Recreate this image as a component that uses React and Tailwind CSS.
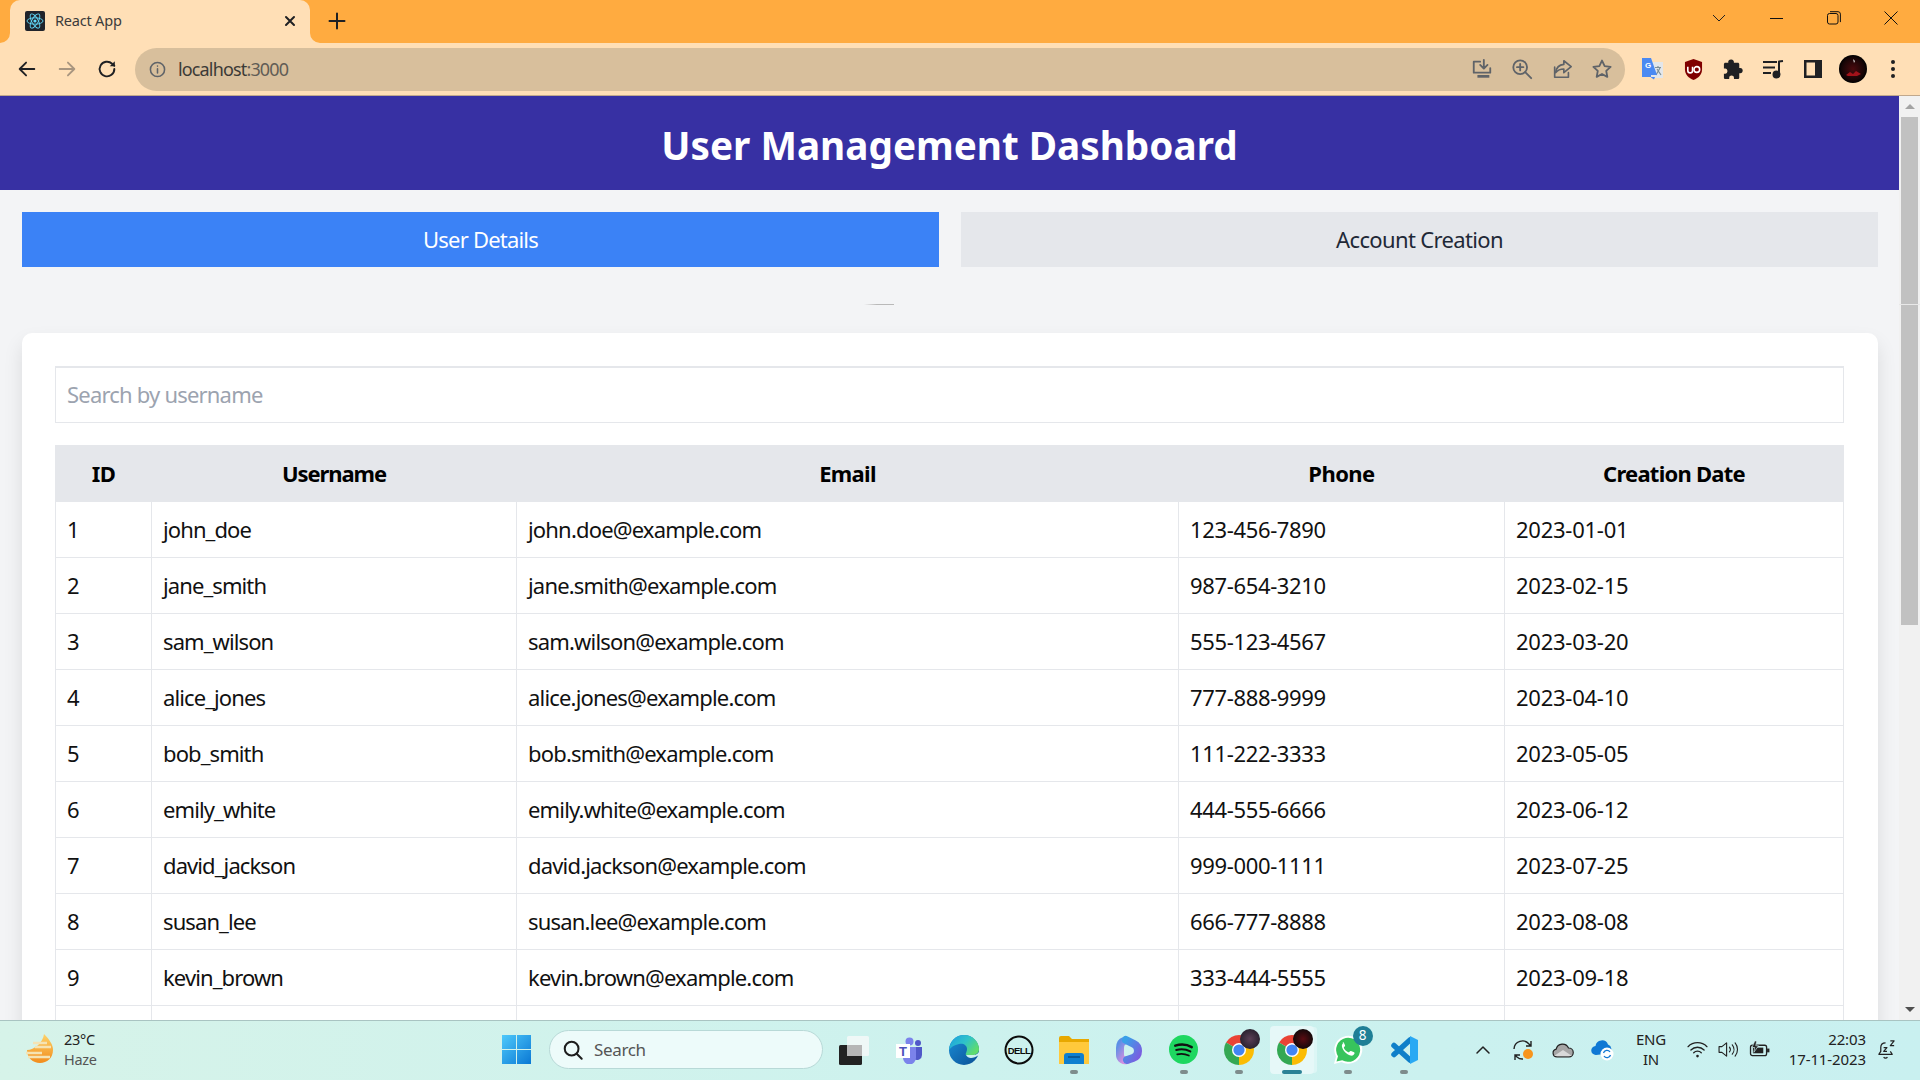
import React from "react";

const rows = [
  [1, "john_doe", "john.doe@example.com", "123-456-7890", "2023-01-01"],
  [2, "jane_smith", "jane.smith@example.com", "987-654-3210", "2023-02-15"],
  [3, "sam_wilson", "sam.wilson@example.com", "555-123-4567", "2023-03-20"],
  [4, "alice_jones", "alice.jones@example.com", "777-888-9999", "2023-04-10"],
  [5, "bob_smith", "bob.smith@example.com", "111-222-3333", "2023-05-05"],
  [6, "emily_white", "emily.white@example.com", "444-555-6666", "2023-06-12"],
  [7, "david_jackson", "david.jackson@example.com", "999-000-1111", "2023-07-25"],
  [8, "susan_lee", "susan.lee@example.com", "666-777-8888", "2023-08-08"],
  [9, "kevin_brown", "kevin.brown@example.com", "333-444-5555", "2023-09-18"],
];

const Slot = ({ children, className = "w-[40px]" }) => (
  <div className={`relative flex h-full shrink-0 items-center justify-center ${className}`}>{children}</div>
);

const TSlot = ({ children, className = "w-[55px]" }) => (
  <div className={`relative flex h-full shrink-0 items-center justify-center pb-[2px] ${className}`}>{children}</div>
);

const Dot = ({ active }) =>
  active ? (
    <span className="absolute bottom-0 left-1/2 h-[4px] w-[20px] -translate-x-1/2 rounded-full bg-[#2b8296]" />
  ) : (
    <span className="absolute bottom-[6px] left-1/2 h-[4px] w-[8px] -translate-x-1/2 rounded-full bg-[#7e8c8c]" />
  );

function ChromeIcon({ id, dark }) {
  return (
    <div className="relative h-[30px] w-[30px]">
      <svg viewBox="0 0 30 30" width="30" height="30">
        <path d="M15 15 L27.99 7.5 A15 15 0 0 0 2.01 7.5 Z" fill="#ea4335" />
        <path d="M15 15 L2.01 7.5 A15 15 0 0 0 15 30 Z" fill="#34a853" />
        <path d="M15 15 L15 30 A15 15 0 0 0 27.99 7.5 Z" fill="#fbbc04" />
        <circle cx="15" cy="15" r="7" fill="#fff" />
        <circle cx="15" cy="15" r="5.6" fill="#4285f4" />
      </svg>
      <svg viewBox="0 0 20 20" width="20" height="20" className="absolute -right-[6px] -top-[6px]">
        <defs>
          <radialGradient id={id}>
            <stop offset="0" stopColor={dark ? "#5a0c12" : "#5b3f56"} />
            <stop offset="1" stopColor={dark ? "#14090a" : "#2a2230"} />
          </radialGradient>
        </defs>
        <circle cx="10" cy="10" r="10" fill={`url(#${id})`} />
      </svg>
    </div>
  );
}

const Stroke = ({ children, size = 20, color = "#1f2023", w = 2, vb = 24 }) => (
  <svg viewBox={`0 0 ${vb} ${vb}`} width={size} height={size} fill="none" stroke={color} strokeWidth={w} strokeLinecap="round" strokeLinejoin="round">
    {children}
  </svg>
);

function TabBar() {
  return (
    <div className="flex h-[43px] shrink-0 items-stretch bg-[#ffab40] pl-[10px]">
      <div className="relative flex w-[300px] items-center rounded-t-[10px] bg-[#ffdfb6] pb-[2px] pl-[15px] pr-[12px]">
        <svg viewBox="0 0 10 10" width="10" height="10" className="absolute bottom-0 -left-[10px]">
          <path d="M10 0 A10 10 0 0 1 0 10 L10 10 Z" fill="#ffdfb6" />
        </svg>
        <svg viewBox="0 0 10 10" width="10" height="10" className="absolute bottom-0 -right-[10px]">
          <path d="M0 0 A10 10 0 0 0 10 10 L0 10 Z" fill="#ffdfb6" />
        </svg>
        <svg viewBox="0 0 20 20" width="20" height="20" className="shrink-0">
          <rect width="20" height="20" rx="2" fill="#20232a" />
          <g fill="none" stroke="#61dafb" strokeWidth="0.9">
            <ellipse cx="10" cy="10" rx="8" ry="3.2" />
            <ellipse cx="10" cy="10" rx="8" ry="3.2" transform="rotate(60 10 10)" />
            <ellipse cx="10" cy="10" rx="8" ry="3.2" transform="rotate(120 10 10)" />
          </g>
          <circle cx="10" cy="10" r="1.6" fill="#61dafb" />
        </svg>
        <span className="ml-[10px] flex-1 text-[14.5px] text-[#3b3b3b] tracking-[-0.2px]">React App</span>
        <Stroke size={16} w={3}>
          <path d="M6 6l12 12M18 6L6 18" />
        </Stroke>
      </div>
      <div className="flex w-[54px] items-center justify-center pb-[2px]">
        <Stroke size={20} w={2.4}>
          <path d="M12 3v18M3 12h18" />
        </Stroke>
      </div>
      <div className="flex-1" />
      <div className="flex items-start">
        <Slot className="!h-[36px] w-[56px]">
          <svg viewBox="0 0 14 8" width="14" height="8" fill="none" stroke="#222" strokeWidth="1">
            <path d="M1 1l6 6 6-6" />
          </svg>
        </Slot>
        <Slot className="!h-[36px] w-[58px]">
          <span className="h-px w-[13px] bg-[#111]" />
        </Slot>
        <Slot className="!h-[36px] w-[57px]">
          <svg viewBox="0 0 14 14" width="14" height="14" fill="none" stroke="#111" strokeWidth="1">
            <rect x="0.5" y="2.5" width="10.5" height="10.5" rx="2" />
            <path d="M3 .7h8a2.4 2.4 0 0 1 2.4 2.4v8" />
          </svg>
        </Slot>
        <Slot className="!h-[36px] w-[58px]">
          <svg viewBox="0 0 14 14" width="14" height="14" fill="none" stroke="#111" strokeWidth="1">
            <path d="M.5.5l13 13M13.5.5l-13 13" />
          </svg>
        </Slot>
      </div>
    </div>
  );
}

function Toolbar() {
  const g = "#5f6368";
  return (
    <div className="flex h-[53px] shrink-0 items-center border-b border-[#c0a88d] bg-[#ffdfb6] pl-[7px]">
      <Slot>
        <Stroke size={22} w={2}>
          <path d="M20 12H4M11 5l-7 7 7 7" />
        </Stroke>
      </Slot>
      <Slot>
        <Stroke size={22} w={2} color="#a8957f">
          <path d="M4 12h16M13 5l7 7-7 7" />
        </Stroke>
      </Slot>
      <Slot>
        <Stroke size={22} w={2.1}>
          <path d="M20 12a8 8 0 1 1-2.4-5.7L20 8.5" />
          <path d="M20.5 3.5v5.5h-5.5" fill="#1f2023" stroke="none" />
        </Stroke>
      </Slot>
      <div className="ml-[8px] flex h-[43px] w-[1490px] shrink-0 items-center rounded-full bg-[#d8bf9c] pl-[14px] pr-[3px]">
        <Stroke size={17} color={g} w={2.2}>
          <circle cx="12" cy="12" r="10" />
          <path d="M12 11v6M12 7v.2" />
        </Stroke>
        <span className="ml-[12px] flex-1 text-[18px] tracking-[-0.85px] text-[#3c3a36]">
          localhost<span className="text-[#615c55]">:3000</span>
        </span>
        <Slot>
          <Stroke size={22} color={g} w={2}>
            <path d="M10 4H3v12h18v-5M14 2v9M10 7.5l4 4 4-4" />
            <path d="M7 20h13" strokeWidth="3" strokeLinecap="butt" />
          </Stroke>
        </Slot>
        <Slot>
          <Stroke size={22} color={g} w={2}>
            <circle cx="10" cy="10" r="7.5" />
            <path d="M15.5 15.5L22 22M10 6.5v7M6.5 10h7" />
          </Stroke>
        </Slot>
        <Slot>
          <Stroke size={22} color={g} w={1.8}>
            <path d="M4 10v11h15v-5" />
            <path d="M14 3l8 6.5-8 6.5v-4c-4 0-6.5 1-9 4 .7-5 3.5-8.5 9-9z" />
          </Stroke>
        </Slot>
        <Slot>
          <Stroke size={22} color={g} w={2}>
            <path d="M12 2.8l2.9 6 6.5.9-4.8 4.4 1.2 6.5-5.8-3.2-5.8 3.2 1.2-6.5-4.8-4.4 6.5-.9z" />
          </Stroke>
        </Slot>
      </div>
      <div className="ml-[8px] flex h-full items-center">
        <Slot>
          <svg viewBox="0 0 22 22" width="22" height="22">
            <path d="M9 4h12v16H9z" fill="#e3e6ea" />
            <path d="M13 9.5h6M16 8v1.5M14 17l4-7M15 11l4 6" stroke="#7d8f96" strokeWidth="1.2" fill="none" />
            <path d="M0 0h9l6 17H9v2.5l3 2 1-2.5H0z" fill="#4b8af2" />
            <text x="3" y="10" fontSize="8" fontWeight="700" fill="#fff" fontFamily="Liberation Sans, sans-serif">G</text>
          </svg>
        </Slot>
        <Slot>
          <svg viewBox="0 0 20 22" width="19" height="21">
            <path d="M10 0l9 3v8c0 5.5-4 9-9 11-5-2-9-5.500-9-11V3z" fill="#800000" />
            <path d="M4 8v4a2.500 2.500 0 0 0 5 0V8" fill="none" stroke="#fff" strokeWidth="1.700" />
            <circle cx="13.500" cy="11" r="3" fill="none" stroke="#fff" strokeWidth="1.700" />
          </svg>
        </Slot>
        <Slot>
          <svg viewBox="0 0 24 24" width="23" height="23">
            <path d="M9.500 1.500a2.800 2.800 0 0 1 2.900 3.500h4.100c.8 0 1.500.7 1.500 1.500v4h1c3.500 0 3.500 5.500 0 5.500h-1v4.500c0 .8-.7 1.500-1.500 1.500h-4v-1.200c0-3.300-5-3.300-5 0V22H3.500C2.700 22 2 21.300 2 20.500v-4h1.200c3.300 0 3.300-5.500 0-5.500H2V6.500C2 5.700 2.700 5 3.500 5h3.100c-.7-1.700.7-3.500 2.900-3.500z" fill="#1f2023" />
          </svg>
        </Slot>
        <Slot>
          <Stroke size={24} w={2} vb={24}>
            <path d="M2 5h14M2 10.500h12M2 16h8" strokeLinecap="butt" />
            <circle cx="15.500" cy="17.500" r="3" fill="#1f2023" />
            <path d="M18 18V4.500l4-.5" strokeLinecap="butt" />
          </Stroke>
        </Slot>
        <Slot>
          <svg viewBox="0 0 18 18" width="18" height="18">
            <path d="M0 0h18v18H0zM2.500 2.500v13H11v-13z" fill="#1f2023" fillRule="evenodd" />
          </svg>
        </Slot>
        <Slot>
          <svg viewBox="0 0 28 28" width="28" height="28">
            <defs>
              <radialGradient id="av">
                <stop offset="0" stopColor="#4a0a0e" />
                <stop offset="0.8" stopColor="#160506" />
                <stop offset="1" stopColor="#000" />
              </radialGradient>
            </defs>
            <circle cx="14" cy="14" r="14" fill="url(#av)" />
            <path d="M7 20l4-3 3 2 3-3 5 3-4 2H9z" fill="#a3121a" />
            <path d="M14 4l2 2-1 2z" fill="#ddd" />
          </svg>
        </Slot>
        <Slot className="w-[39px]">
          <svg viewBox="0 0 6 20" width="6" height="20" fill="#1f2023">
            <circle cx="3" cy="3" r="2" />
            <circle cx="3" cy="10" r="2" />
            <circle cx="3" cy="17" r="2" />
          </svg>
        </Slot>
      </div>
    </div>
  );
}

function Scrollbar() {
  return (
    <div className="relative flex w-[21px] shrink-0 flex-col items-center bg-[#f1f1f1]">
      <div className="flex h-[21px] items-center justify-center">
        <span className="h-0 w-0 border-x-[5px] border-b-[5px] border-x-transparent border-b-[#a3a3a3]" />
      </div>
      <div className="h-[508px] w-[17px] bg-[#c1c1c1]" />
      <div className="flex-1" />
      <div className="flex h-[21px] items-center justify-center">
        <span className="h-0 w-0 border-x-[5px] border-t-[5px] border-x-transparent border-t-[#505050]" />
      </div>
      <span className="absolute left-0 right-0 top-[208px] h-px bg-[#e8e8e8]" />
    </div>
  );
}

function Content() {
  const th = "border border-[#e5e7eb] px-[12px] text-center font-bold text-black";
  const td = "border border-[#e5e7eb] px-[11px] text-[#111]";
  const cols = ["tracking-[-0.8px]", "tracking-[-0.9px]", "tracking-[-0.82px]", "tracking-[-0.35px]", "tracking-[-0.25px]"];
  return (
    <div className="min-w-0 flex-1 overflow-hidden bg-[#f3f4f6] text-[22px] tracking-[-0.8px]">
      <h1 className="flex h-[94px] items-center justify-center bg-[#3730a3] pt-[5px] text-[38.7px] font-bold tracking-normal text-white">
        User Management Dashboard
      </h1>
      <div className="grid grid-cols-2 gap-[22px] pl-[22px] pr-[21px] pt-[22px]">
        <button className="h-[55px] bg-[#3b82f6] text-white">User Details</button>
        <button className="h-[55px] bg-[#e5e7eb] tracking-[-0.65px] text-[#1f2937]">Account Creation</button>
      </div>
      <div className="h-[66px] pl-[851px] pt-[37px]">
        <div className="h-px w-[43px] bg-linear-to-r from-[#f3f4f6] from-30% to-[#b9b9b9] to-60%" />
      </div>
      <div className="ml-[22px] mr-[21px] rounded-t-[10px] bg-white pb-[40px] pl-[33px] pr-[34px] pt-[33px] shadow-[0_10px_19px_0_rgba(0,0,0,0.1)]">
        <div className="mb-[22px] flex h-[57px] items-center border border-t-2 border-[#e5e7eb] px-[11px] pb-[2px] text-[#9ca3af]">
          Search by username
        </div>
        <table className="w-full table-fixed border-collapse text-left">
          <colgroup>
            <col className="w-[96px]" />
            <col className="w-[365px]" />
            <col className="w-[662px]" />
            <col className="w-[326px]" />
            <col />
          </colgroup>
          <thead>
            <tr className="h-[56px] bg-[#e5e7eb]">
              <th className={`${th} tracking-[-0.55px]`}>ID</th>
              <th className={`${th} tracking-[-1.1px]`}>Username</th>
              <th className={`${th} tracking-[-0.7px]`}>Email</th>
              <th className={`${th} tracking-[-0.55px]`}>Phone</th>
              <th className={`${th} tracking-[-0.75px]`}>Creation Date</th>
            </tr>
          </thead>
          <tbody>
            {rows.map((r) => (
              <tr key={r[0]} className="h-[56px]">
                {r.map((c, i) => (
                  <td key={i} className={`${td} ${cols[i]}`}>{c}</td>
                ))}
              </tr>
            ))}
            <tr className="h-[56px]">
              <td className={td} />
              <td className={td} />
              <td className={td} />
              <td className={td} />
              <td className={td} />
            </tr>
          </tbody>
        </table>
      </div>
    </div>
  );
}

function Taskbar() {
  return (
    <div className="flex h-[60px] shrink-0 items-stretch border-t border-[#a9c4c2] bg-linear-to-r from-[#d6f3e9] via-[#cdf2ee] to-[#c9f0f0] text-[#222]">
      <div className="flex w-[489px] shrink-0 items-center pb-[3px] pl-[24px]">
        <svg viewBox="0 0 32 32" width="32" height="32" className="shrink-0">
          <defs>
            <linearGradient id="sun" x1="0" y1="0" x2="0" y2="1">
              <stop offset="0" stopColor="#fdd36a" />
              <stop offset="1" stopColor="#f28c1c" />
            </linearGradient>
          </defs>
          <path d="M20 1c6 6 9 11 9 16 0 8-6 13-13 13S3 25 3 17C10 17 19 10 20 1z" fill="url(#sun)" />
          <path d="M9 10h14M11 14h16M2 20h16M4 24h22" stroke="#f5e3b3" strokeWidth="2.500" />
        </svg>
        <div className="ml-[8px] text-[14.500px] leading-[20px] tracking-[-0.3px]">
          <div>23°C</div>
          <div className="text-[#555]">Haze</div>
        </div>
      </div>
      <TSlot>
        <svg viewBox="0 0 29 29" width="29" height="29">
          <defs>
            <linearGradient id="win" x1="0" y1="0" x2="1" y2="1">
              <stop offset="0" stopColor="#4ec9fb" />
              <stop offset="1" stopColor="#0a78d4" />
            </linearGradient>
          </defs>
          <path d="M0 0h14v14H0zM15 0h14v14H15zM0 15h14v14H0zM15 15h14v14H15z" fill="url(#win)" />
        </svg>
      </TSlot>
      <div className="mb-[2px] ml-[5px] flex h-[39px] w-[274px] shrink-0 items-center self-center rounded-full border border-[#b8d9d7] bg-[#edfbfa] pl-[12px]">
        <Stroke size={22} w={2.2} color="#1d1d1d">
          <circle cx="10.500" cy="10.500" r="7.500" />
          <path d="M16 16l5.500 5.500" />
        </Stroke>
        <span className="ml-[10px] text-[17px] tracking-[-0.35px] text-[#555]">Search</span>
      </div>
      <TSlot className="ml-[3px] w-[55px]">
        <svg viewBox="0 0 30 30" width="30" height="30">
          <rect x="0" y="10" width="23" height="20" rx="1.500" fill="#222" />
          <rect x="8" y="1" width="22" height="20" rx="1.500" fill="#f7f9f9" fillOpacity="0.8" />
          <rect x="8" y="10" width="15" height="11" fill="#b6b6b6" />
        </svg>
      </TSlot>
      <TSlot>
        <svg viewBox="0 0 28 28" width="28" height="28">
          <circle cx="14.500" cy="5.500" r="4" fill="#7b83eb" />
          <circle cx="23" cy="7" r="3" fill="#5059c9" />
          <path d="M18 11h9v8a5 5 0 0 1-8 4z" fill="#5059c9" />
          <path d="M8 11h13v11a6.500 6.500 0 0 1-13 0z" fill="#7b83eb" />
          <rect x="1" y="8" width="14" height="14" fill="#fff" />
          <text x="4" y="20" fontSize="13" fontWeight="700" fill="#4b53bc" fontFamily="Liberation Sans, sans-serif">T</text>
        </svg>
      </TSlot>
      <TSlot>
        <svg viewBox="0 0 30 30" width="30" height="30">
          <defs>
            <linearGradient id="eg" x1="0" y1="0" x2="1" y2="0.6">
              <stop offset="0" stopColor="#1b9de2" />
              <stop offset="0.55" stopColor="#2fc3c9" />
              <stop offset="1" stopColor="#5fdc6c" />
            </linearGradient>
            <linearGradient id="eb" x1="0" y1="0" x2="1" y2="1">
              <stop offset="0" stopColor="#1a8fd8" />
              <stop offset="1" stopColor="#0b4f94" />
            </linearGradient>
          </defs>
          <circle cx="15" cy="15" r="15" fill="url(#eb)" />
          <path d="M0 15C1 5 8 0 15 0c9 0 15 7 15 14 0 4-3 6-7 6h-6c-1-1 1-3 1-6 0-4-4-6-8-5-5 1-8 3-10 6z" fill="url(#eg)" />
          <path d="M17 20c2 4 7 4 13 0v-3c-2 3-5 3-7 3z" fill="#cdf2ee" />
        </svg>
      </TSlot>
      <TSlot>
        <svg viewBox="0 0 30 30" width="30" height="30">
          <circle cx="15" cy="15" r="13.500" fill="none" stroke="#0b0b0b" strokeWidth="2" />
          <text x="15" y="18.500" textAnchor="middle" fontSize="9.500" fontWeight="700" letterSpacing="-0.6" fill="#0b0b0b" fontFamily="Liberation Sans, sans-serif">DELL</text>
        </svg>
      </TSlot>
      <TSlot>
        <svg viewBox="0 0 30 28" width="30" height="28">
          <path d="M0 2a2 2 0 0 1 2-2h8l3 3h17v24H0z" fill="#e8a800" />
          <path d="M0 6h30v22H0z" fill="#ffc93c" />
          <path d="M5 20a3 3 0 0 1 3-3h14a3 3 0 0 1 3 3v8H5z" fill="#0f7fd0" />
          <path d="M9 21h12" stroke="#0a4f88" strokeWidth="1.500" />
        </svg>
        <Dot />
      </TSlot>
      <TSlot>
        <svg viewBox="0 0 28 30" width="28" height="30" fill="none" strokeWidth="8" strokeLinecap="round" strokeLinejoin="round">
          <defs>
            <linearGradient id="c1" x1="0" y1="0" x2="1" y2="1">
              <stop offset="0" stopColor="#3aa0e8" />
              <stop offset="1" stopColor="#7c5ce0" />
            </linearGradient>
            <linearGradient id="c2" x1="0" y1="0" x2="0.6" y2="1">
              <stop offset="0" stopColor="#5b8fe6" />
              <stop offset="1" stopColor="#d58fe0" />
            </linearGradient>
          </defs>
          <path d="M9 6C6 7 5 10 5 13v7c0 4 4 6 7 5" stroke="url(#c2)" />
          <path d="M11 5l8 4c3 1.500 4 4 4 7 0 4-2 6-5 7l-6 2" stroke="url(#c1)" />
        </svg>
      </TSlot>
      <TSlot>
        <svg viewBox="0 0 30 30" width="29" height="29">
          <circle cx="15" cy="15" r="15" fill="#1ed760" />
          <g fill="none" stroke="#111" strokeLinecap="round">
            <path d="M6.500 11c6-1.800 12-1.300 17 1.500" strokeWidth="2.600" />
            <path d="M7.500 15.500c5-1.300 10-.9 14.500 1.500" strokeWidth="2.200" />
            <path d="M8.500 20c4-1 8-.7 12 1.300" strokeWidth="1.800" />
          </g>
        </svg>
        <Dot />
      </TSlot>
      <TSlot>
        <ChromeIcon id="ch1" />
        <Dot />
      </TSlot>
      <TSlot>
        <div className="relative mr-[4px] flex h-[48px] w-[44px] items-center justify-center rounded-[4px] bg-[#e6f8f8] shadow-[4px_0_0_-1px_#dcf6f5]">
          <ChromeIcon id="ch2" dark />
          <Dot active />
        </div>
      </TSlot>
      <TSlot className="-ml-[1px] mr-[1px] w-[55px]">
        <div className="relative h-[30px] w-[30px]">
          <svg viewBox="0 0 30 30" width="30" height="30">
            <path d="M1 29l2-7.500a14 14 0 1 1 5.500 5.500z" fill="#fff" />
            <path d="M3.500 26.500l1.500-5.200a12 12 0 1 1 4.200 4z" fill="#37c45c" />
            <path d="M10.500 8c-1 .5-2 2-1.500 4 1 3.500 4.500 7.500 8.500 8.500 2 .5 3.500-.5 4-2 .2-.7 0-1-1-1.500l-2.500-1c-.6-.2-1 0-1.500.8-.5.700-1 .7-1.700.3-1.600-.8-3-2.200-3.800-3.800-.3-.6-.2-1 .4-1.500.8-.7.800-1.100.5-1.800l-1-2.200c-.2-.5-.6-.6-1.400-.3z" fill="#fff" />
          </svg>
          <span className="absolute -right-[10px] -top-[9px] flex h-[20px] w-[20px] items-center justify-center rounded-full bg-[#1f7f96] text-[13.500px] tracking-normal text-white">8</span>
        </div>
        <Dot />
      </TSlot>
      <TSlot>
        <svg viewBox="0 0 30 30" width="30" height="30">
          <path d="M21 5L5 19.500M5 10.500L21 25" fill="none" stroke="#0f7fc9" strokeWidth="5.500" strokeLinecap="round" />
          <path d="M21 1l8 4v20l-8 4z" fill="#2aa9f3" />
        </svg>
        <Dot />
      </TSlot>
      <TSlot className="ml-[32px] w-[40px]">
        <Stroke size={18} w={2} color="#222">
          <path d="M4 16l8-8 8 8" />
        </Stroke>
      </TSlot>
      <TSlot className="w-[40px]">
        <svg viewBox="0 0 24 24" width="24" height="24" fill="none" stroke="#222" strokeWidth="1.400">
          <path d="M3 11a8.500 8.500 0 0 1 15-5l2 2M20 3v5h-5" />
          <path d="M9 17H4v5M4 17l2 2a8 8 0 0 0 6 2" />
          <circle cx="17" cy="16" r="5" fill="#f7941d" stroke="none" />
        </svg>
      </TSlot>
      <TSlot className="w-[40px]">
        <svg viewBox="0 0 22 16" width="22" height="16">
          <path d="M5 15a4 4 0 0 1-.8-7.900A6.500 6.500 0 0 1 16.500 6 4.500 4.500 0 0 1 17 15z" fill="#a6a6a6" stroke="#222" strokeWidth="1.200" />
          <path d="M2 14l9-6 9 6z" fill="#d9d9d9" />
        </svg>
      </TSlot>
      <TSlot className="w-[40px]">
        <svg viewBox="0 0 24 22" width="24" height="22">
          <path d="M5 16a4.500 4.500 0 0 1-.5-9A6.500 6.500 0 0 1 17 5.500a5 5 0 0 1 1 9z" fill="#0f78d4" />
          <circle cx="16" cy="15" r="6.500" fill="#fff" />
          <path d="M12.500 14a3.600 3.600 0 0 1 6.500-1M19.500 16a3.600 3.600 0 0 1-6.500 1" fill="none" stroke="#0f78d4" strokeWidth="1.300" />
        </svg>
      </TSlot>
      <div className="flex w-[56px] shrink-0 flex-col items-center justify-center pb-[3px] text-[15px] leading-[20px] tracking-[-0.2px]">
        <span>ENG</span>
        <span>IN</span>
      </div>
      <TSlot className="ml-[3px] w-[31px]">
        <svg viewBox="0 0 22 18" width="21" height="17" fill="none" stroke="#222" strokeWidth="1.400" strokeLinecap="round">
          <path d="M1 6a14 14 0 0 1 20 0M4 9.500a10 10 0 0 1 14 0M7 12.500a5.500 5.500 0 0 1 8 0" />
          <circle cx="11" cy="16" r="1.400" fill="#222" stroke="none" />
        </svg>
      </TSlot>
      <TSlot className="w-[31px]">
        <svg viewBox="0 0 22 18" width="21" height="17" fill="none" stroke="#222" strokeWidth="1.200" strokeLinecap="round" strokeLinejoin="round">
          <path d="M1 6v6h3l5 4V2L4 6z" />
          <path d="M12 6.500a4 4 0 0 1 0 5M15 4a8 8 0 0 1 0 10M18 2a11 11 0 0 1 0 14" />
        </svg>
      </TSlot>
      <TSlot className="w-[31px]">
        <svg viewBox="0 0 22 18" width="21" height="17">
          <rect x="1.500" y="4.500" width="17" height="11" rx="2" fill="none" stroke="#222" strokeWidth="1.400" />
          <path d="M4 7h11v6H4z" fill="#222" />
          <path d="M19 8h2.500v4H19z" fill="#222" />
          <path d="M6 0L3 7h3l-1 5 5-7H7l1-5z" fill="#222" stroke="#cdf0f0" strokeWidth="0.700" />
        </svg>
      </TSlot>
      <div className="flex w-[91px] shrink-0 flex-col items-end justify-center pb-[3px] text-[15px] leading-[20px] tracking-[-0.1px]">
        <span>22:03</span>
        <span>17-11-2023</span>
      </div>
      <TSlot className="ml-[1px] w-[38px]">
        <svg viewBox="0 0 22 22" width="21" height="21" fill="none" stroke="#222" strokeWidth="1.300" strokeLinejoin="round">
          <path d="M10 4c-3.500 0-5 2.500-5 5v4l-2 3h14l-2-3" />
          <path d="M8 19a2.500 2.500 0 0 0 4 0" />
          <path d="M8 9h3.500L8 13h3.500M15 2h4l-4 5h4" strokeWidth="1.200" />
        </svg>
      </TSlot>
    </div>
  );
}

export default function App() {
  return (
    <div className="flex h-screen w-full flex-col overflow-hidden font-['Noto_Sans',sans-serif]">
      <TabBar />
      <Toolbar />
      <div className="flex min-h-0 flex-1">
        <Content />
        <Scrollbar />
      </div>
      <Taskbar />
    </div>
  );
}
